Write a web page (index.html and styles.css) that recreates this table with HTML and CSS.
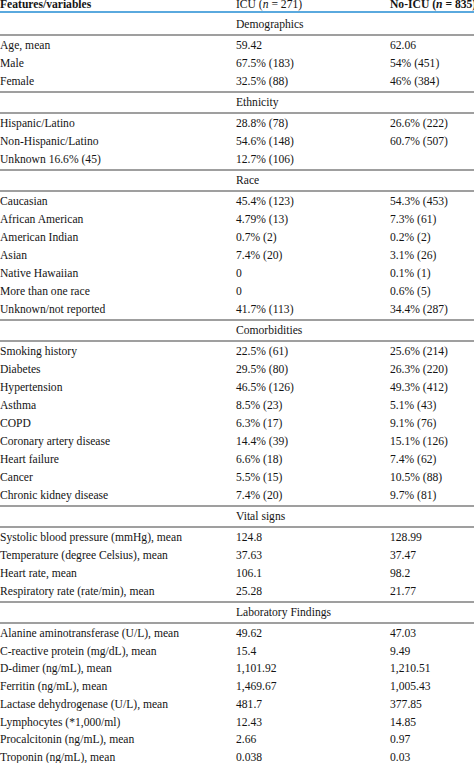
FILE: index.html
```html
<!DOCTYPE html>
<html lang="en">
<head>
<meta charset="utf-8">
<title>ICU vs No-ICU features</title>
<link rel="stylesheet" href="styles.css">
</head>
<body>
<table class="stats">
  <colgroup><col class="c1"><col class="c2"><col class="c3"></colgroup>
  <thead>
    <tr><th class="feat">Features/variables</th><th class="icu">ICU (<i>n</i> = 271)</th><th class="noicu">No-ICU (<i>n</i> = 835)</th></tr>
  </thead>
  <tbody class="section first"><tr><td></td><td colspan="2">Demographics</td></tr></tbody>
  <tbody class="group">
    <tr><td>Age, mean</td><td>59.42</td><td>62.06</td></tr>
    <tr><td>Male</td><td>67.5% (183)</td><td>54% (451)</td></tr>
    <tr><td>Female</td><td>32.5% (88)</td><td>46% (384)</td></tr>
  </tbody>
  <tbody class="section"><tr><td></td><td colspan="2">Ethnicity</td></tr></tbody>
  <tbody class="group">
    <tr><td>Hispanic/Latino</td><td>28.8% (78)</td><td>26.6% (222)</td></tr>
    <tr><td>Non-Hispanic/Latino</td><td>54.6% (148)</td><td>60.7% (507)</td></tr>
    <tr><td>Unknown 16.6% (45)</td><td>12.7% (106)</td><td></td></tr>
  </tbody>
  <tbody class="section"><tr><td></td><td colspan="2">Race</td></tr></tbody>
  <tbody class="group">
    <tr><td>Caucasian</td><td>45.4% (123)</td><td>54.3% (453)</td></tr>
    <tr><td>African American</td><td>4.79% (13)</td><td>7.3% (61)</td></tr>
    <tr><td>American Indian</td><td>0.7% (2)</td><td>0.2% (2)</td></tr>
    <tr><td>Asian</td><td>7.4% (20)</td><td>3.1% (26)</td></tr>
    <tr><td>Native Hawaiian</td><td>0</td><td>0.1% (1)</td></tr>
    <tr><td>More than one race</td><td>0</td><td>0.6% (5)</td></tr>
    <tr><td>Unknown/not reported</td><td>41.7% (113)</td><td>34.4% (287)</td></tr>
  </tbody>
  <tbody class="section"><tr><td></td><td colspan="2">Comorbidities</td></tr></tbody>
  <tbody class="group">
    <tr><td>Smoking history</td><td>22.5% (61)</td><td>25.6% (214)</td></tr>
    <tr><td>Diabetes</td><td>29.5% (80)</td><td>26.3% (220)</td></tr>
    <tr><td>Hypertension</td><td>46.5% (126)</td><td>49.3% (412)</td></tr>
    <tr><td>Asthma</td><td>8.5% (23)</td><td>5.1% (43)</td></tr>
    <tr><td>COPD</td><td>6.3% (17)</td><td>9.1% (76)</td></tr>
    <tr><td>Coronary artery disease</td><td>14.4% (39)</td><td>15.1% (126)</td></tr>
    <tr><td>Heart failure</td><td>6.6% (18)</td><td>7.4% (62)</td></tr>
    <tr><td>Cancer</td><td>5.5% (15)</td><td>10.5% (88)</td></tr>
    <tr><td>Chronic kidney disease</td><td>7.4% (20)</td><td>9.7% (81)</td></tr>
  </tbody>
  <tbody class="section"><tr><td></td><td colspan="2">Vital signs</td></tr></tbody>
  <tbody class="group">
    <tr><td>Systolic blood pressure (mmHg), mean</td><td>124.8</td><td>128.99</td></tr>
    <tr><td>Temperature (degree Celsius), mean</td><td>37.63</td><td>37.47</td></tr>
    <tr><td>Heart rate, mean</td><td>106.1</td><td>98.2</td></tr>
    <tr><td>Respiratory rate (rate/min), mean</td><td>25.28</td><td>21.77</td></tr>
  </tbody>
  <tbody class="section"><tr><td></td><td colspan="2">Laboratory Findings</td></tr></tbody>
  <tbody class="group lab">
    <tr><td>Alanine aminotransferase (U/L), mean</td><td>49.62</td><td>47.03</td></tr>
    <tr><td>C-reactive protein (mg/dL), mean</td><td>15.4</td><td>9.49</td></tr>
    <tr><td>D-dimer (ng/mL), mean</td><td>1,101.92</td><td>1,210.51</td></tr>
    <tr><td>Ferritin (ng/mL), mean</td><td>1,469.67</td><td>1,005.43</td></tr>
    <tr><td>Lactase dehydrogenase (U/L), mean</td><td>481.7</td><td>377.85</td></tr>
    <tr><td>Lymphocytes (*1,000/ml)</td><td>12.43</td><td>14.85</td></tr>
    <tr><td>Procalcitonin (ng/mL), mean</td><td>2.66</td><td>0.97</td></tr>
    <tr><td>Troponin (ng/mL), mean</td><td>0.038</td><td>0.03</td></tr>
  </tbody>
</table>
</body>
</html>
```
FILE: styles.css
```css
html, body {
  margin: 0;
  padding: 0;
  background: #ffffff;
  overflow: hidden;
}

body {
  font-family: "Liberation Serif", "Times New Roman", serif;
  font-size: 11.6px;
  color: #141414;
}

.stats {
  table-layout: fixed;
  width: 474px;
  border-collapse: separate;
  border-spacing: 0;
  margin-top: -2px;
}

.c1 { width: 236px; }
.c2 { width: 154px; }
.c3 { width: 84px; }

.stats th,
.stats td {
  padding: 0;
  text-align: left;
  white-space: nowrap;
  overflow: visible;
  vertical-align: top;
}

.stats th {
  line-height: 13px;
  border-bottom: 2px solid #5aa9de;
  font-weight: bold;
}

.stats th.icu {
  font-weight: normal;
}

.stats td {
  line-height: 18px;
}

.lab td {
  line-height: 17.7px;
}

.section td {
  padding-top: 1px;
  border-top: 2px solid #9f9f9f;
  border-bottom: 2px solid #9f9f9f;
}

.section.first td {
  border-top: 0;
  padding-top: 3px;
}

.group tr:first-child td {
  padding-top: 1px;
}
```
